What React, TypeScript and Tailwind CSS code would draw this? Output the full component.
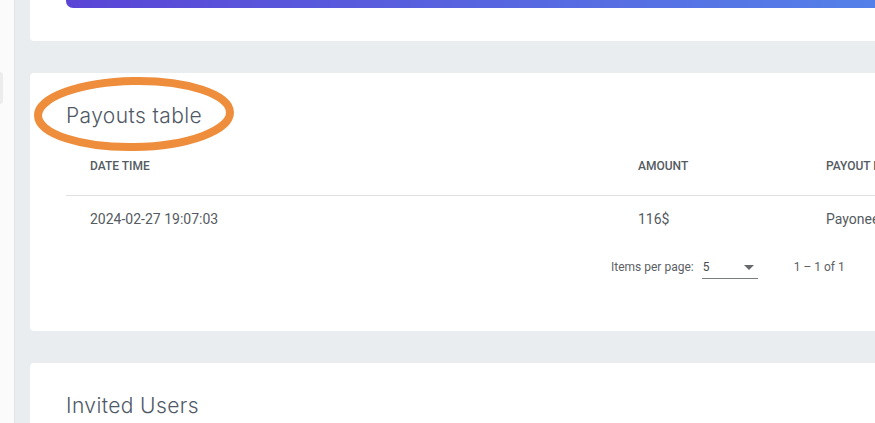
import React from "react";

export default function App() {
  return (
    <div className="flex h-[423px] w-[875px] overflow-hidden bg-[#e9edf0] font-['Roboto',sans-serif]">
      <aside className="w-[15px] shrink-0 bg-[#fbfbfb] border-r border-[#e2e5e8] pt-[72px]">
        <div className="h-[32px] w-[3px] rounded-r-[3px] bg-[#ececec]" />
      </aside>
      <main className="flex min-w-0 flex-1 flex-col gap-[32px] pl-[15px]">
        <section className="h-[41px] w-[900px] shrink-0 rounded-b-[4px] bg-white pl-[36px]">
          <div className="h-[8px] w-full rounded-bl-[7px] bg-gradient-to-r from-[#5a44d6] via-[#5766e0] to-[#5384ea]" />
        </section>

        <section className="relative h-[258px] w-[900px] shrink-0 rounded-[4px] bg-white pl-[36px]">
          <h2 className="pt-[28px] text-[21px] leading-[30px] font-light text-[#4f5966] font-['Inter',sans-serif] tracking-[0.4px]">
            Payouts table
          </h2>
          <div className="mt-[8px]">
            <div className="flex h-[57px] items-center border-b border-[#e0e0e0] pb-[3px] text-[12px] font-medium text-[#555b62]">
              <div className="w-[572px] pl-[24px]">DATE TIME</div>
              <div className="w-[188px]">AMOUNT</div>
              <div className="whitespace-nowrap">PAYOUT METHOD</div>
            </div>
            <div className="flex h-[48px] items-center pb-[2px] text-[14px] text-[#555b62]">
              <div className="w-[572px] pl-[24px]">2024-02-27 19:07:03</div>
              <div className="w-[188px]">116$</div>
              <div className="whitespace-nowrap">Payoneer</div>
            </div>
            <div className="-mt-[3px] flex h-[52px] items-center pl-[545px] text-[12px] text-[#5d6166]">
              <span>Items per page:</span>
              <div className="relative ml-[8px] flex h-[24px] w-[56px] items-center border-b border-[#7a7d80] pl-[1px] text-[12px] text-[#4a4e52]">
                <span>5</span>
                <span className="absolute right-[4px] top-[10px] h-0 w-0 border-x-[5px] border-t-[5px] border-x-transparent border-t-[#666a6e]" />
              </div>
              <span className="ml-[36px]">1 – 1 of 1</span>
            </div>
          </div>
          <svg
            className="pointer-events-none absolute left-0 top-0"
            width="260"
            height="100"
            viewBox="0 0 260 100"
          >
            <ellipse
              cx="104"
              cy="41"
              rx="96"
              ry="33"
              fill="none"
              stroke="#ee8d3b"
              strokeWidth="8"
              transform="rotate(-1 104 41)"
            />
          </svg>
        </section>

        <section className="h-[120px] w-[900px] shrink-0 rounded-t-[4px] bg-white pl-[36px]">
          <h2 className="pt-[28px] text-[21px] leading-[30px] font-light text-[#4f5966] font-['Inter',sans-serif] tracking-[0.4px]">
            Invited Users
          </h2>
        </section>
      </main>
    </div>
  );
}
